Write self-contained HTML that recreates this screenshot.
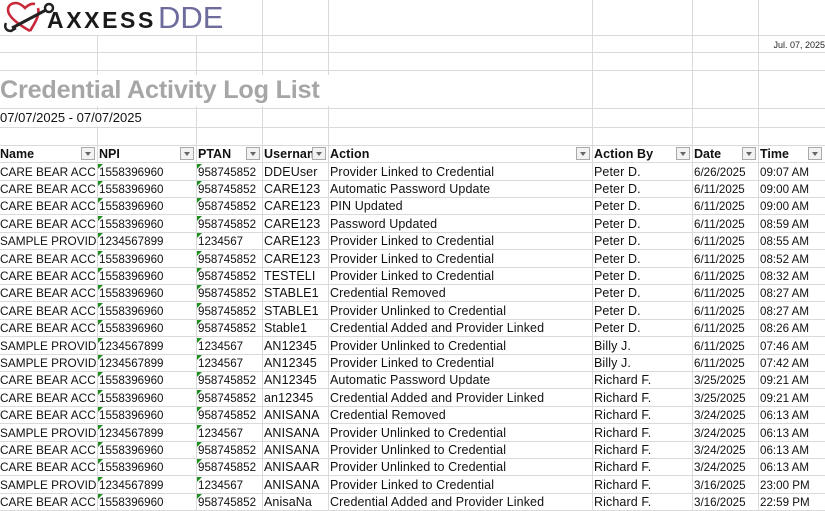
<!DOCTYPE html>
<html><head><meta charset="utf-8"><style>
body{margin:0;width:825px;height:510px;overflow:hidden;background:#fff;font-family:"Liberation Sans",sans-serif;position:relative}
.v{position:absolute;top:0;width:1px;height:510px;background:#dadada}
.h{position:absolute;left:0;width:825px;height:1px;background:#dadada}
.r{position:absolute;left:0;width:825px;height:16px;font-size:12.5px;line-height:17px;color:#111}
.r span{position:absolute;top:0;height:16px;white-space:nowrap;overflow:hidden;background:#fff;letter-spacing:0.1px}
.r span.n{font-size:11.6px;letter-spacing:0}
.r span.a{font-size:11.8px;letter-spacing:0}
.tri{position:absolute;top:0;width:0;height:0;border-top:5px solid #1e8e1e;border-right:5px solid transparent}
.hd span{font-weight:bold;font-size:12.5px!important}
.fb{position:absolute;top:1px;width:14px;height:13px;border:1px solid #a9a9a9;background:#f2f2f2;box-sizing:border-box}
.fb:after{content:"";position:absolute;left:3px;top:4px;border-top:4px solid #666;border-left:3px solid transparent;border-right:3px solid transparent}
</style></head><body>
<div class="v" style="left:97px"></div><div class="v" style="left:196px"></div><div class="v" style="left:262px"></div><div class="v" style="left:328px"></div><div class="v" style="left:592px"></div><div class="v" style="left:692px"></div><div class="v" style="left:758px"></div>
<div class="h" style="top:35px"></div><div class="h" style="top:52px"></div><div class="h" style="top:70px"></div><div class="h" style="top:108px"></div><div class="h" style="top:127px"></div><div class="h" style="top:145px"></div>
<div style="position:absolute;left:0;top:0;width:230px;height:35px;background:#fff">
<svg width="60" height="35" viewBox="0 0 60 35" style="position:absolute;left:2px;top:1px">
<path d="M28 30 C14 22 6 15 6 9 C6 4 10 2 14 2 C18 2 21 5 23 7 C26 4 29 2 33 3" fill="none" stroke="#c8283a" stroke-width="2.6"/>
<path d="M36 7 C38 14 33 22 28 30" fill="none" stroke="#c8283a" stroke-width="2.6"/>
<path d="M10 27 L44 9" stroke="#222" stroke-width="3"/>
<circle cx="47" cy="7" r="4" fill="none" stroke="#222" stroke-width="2.5"/>
<path d="M4 22 C2 26 4 30 9 30 L14 27" fill="none" stroke="#222" stroke-width="2.5"/>
</svg>
<div style="position:absolute;left:47px;top:6px;font-size:23px;font-weight:bold;letter-spacing:2.6px;color:#1a1a1a;line-height:28px">AXXESS</div>
<div style="position:absolute;left:158px;top:1px;font-size:31px;color:#6e6c9c;line-height:34px">DDE</div>
</div>
<div style="position:absolute;left:761px;top:38px;width:64px;background:#fff;font-size:9px;line-height:14px;text-align:right;color:#222">Jul. 07, 2025</div>
<div style="position:absolute;left:0;top:75px;width:330px;background:#fff;font-size:25.2px;font-weight:bold;color:#a6a6a6;line-height:31px;letter-spacing:-0.2px">Credential Activity Log List</div>
<div style="position:absolute;left:0;top:110px;width:150px;background:#fff;font-size:13px;line-height:16px;color:#111">07/07/2025 - 07/07/2025</div>
<div id="t"></div>
<script>
var L=[0,97,196,262,328,592,692,758,825];
var K=['a','n','n','','','','n','n'];
var t=document.getElementById('t'),h='';
function row(y,c,hd){var s='<div class="r'+(hd?' hd':'')+'" style="top:'+y+'px">';
for(var i=0;i<8;i++){s+='<span class="'+K[i]+'" style="left:'+(L[i]+(i?2:0))+'px;width:'+(L[i+1]-L[i]-(i?2:1))+'px">'+c[i]+'</span>';}
if(hd){[81,180,246,312,576,676,742,808].forEach(function(a){s+='<div class="fb" style="left:'+a+'px"></div>'});}
else{s+='<div class="tri" style="left:98px"></div><div class="tri" style="left:197px"></div>';}
return s+'</div><div class="h" style="top:'+(y+16)+'px"></div>';}
h+=row(146,['Name','NPI','PTAN','Usernam','Action','Action By','Date','Time'],1);
var C='CARE BEAR ACCO',S='SAMPLE PROVIDE',N1='1558396960',N2='1234567899',P1='958745852',P2='1234567';
var D=[[C,1,'DDEUser','Provider Linked to Credential','Peter D.','6/26/2025','09:07 AM'],
[C,1,'CARE123','Automatic Password Update','Peter D.','6/11/2025','09:00 AM'],
[C,1,'CARE123','PIN Updated','Peter D.','6/11/2025','09:00 AM'],
[C,1,'CARE123','Password Updated','Peter D.','6/11/2025','08:59 AM'],
[S,0,'CARE123','Provider Linked to Credential','Peter D.','6/11/2025','08:55 AM'],
[C,1,'CARE123','Provider Linked to Credential','Peter D.','6/11/2025','08:52 AM'],
[C,1,'TESTELI','Provider Linked to Credential','Peter D.','6/11/2025','08:32 AM'],
[C,1,'STABLE1','Credential Removed','Peter D.','6/11/2025','08:27 AM'],
[C,1,'STABLE1','Provider Unlinked to Credential','Peter D.','6/11/2025','08:27 AM'],
[C,1,'Stable1','Credential Added and Provider Linked','Peter D.','6/11/2025','08:26 AM'],
[S,0,'AN12345','Provider Unlinked to Credential','Billy J.','6/11/2025','07:46 AM'],
[S,0,'AN12345','Provider Linked to Credential','Billy J.','6/11/2025','07:42 AM'],
[C,1,'AN12345','Automatic Password Update','Richard F.','3/25/2025','09:21 AM'],
[C,1,'an12345','Credential Added and Provider Linked','Richard F.','3/25/2025','09:21 AM'],
[C,1,'ANISANA','Credential Removed','Richard F.','3/24/2025','06:13 AM'],
[S,0,'ANISANA','Provider Unlinked to Credential','Richard F.','3/24/2025','06:13 AM'],
[C,1,'ANISANA','Provider Unlinked to Credential','Richard F.','3/24/2025','06:13 AM'],
[C,1,'ANISAAR','Provider Unlinked to Credential','Richard F.','3/24/2025','06:13 AM'],
[S,0,'ANISANA','Provider Linked to Credential','Richard F.','3/16/2025','23:00 PM'],
[C,1,'AnisaNa','Credential Added and Provider Linked','Richard F.','3/16/2025','22:59 PM']];
D.forEach(function(d,i){h+=row(Math.round(163.5+i*17.4),[d[0],d[1]?N1:N2,d[1]?P1:P2,d[2],d[3],d[4],d[5],d[6]]);});
t.innerHTML=h;
</script>
</body></html>
